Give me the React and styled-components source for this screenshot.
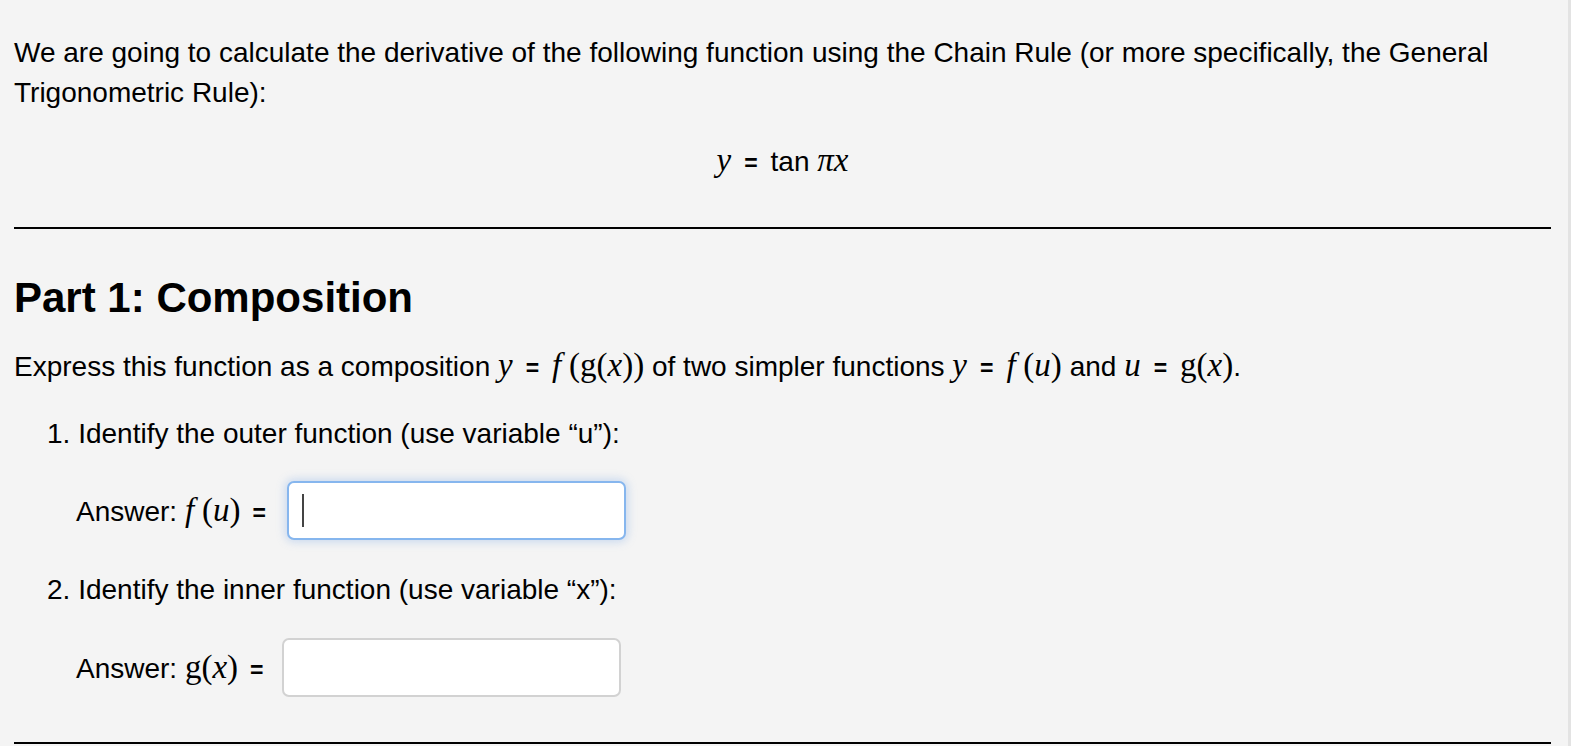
import React from 'react'
import styled, { createGlobalStyle } from 'styled-components'

const GlobalStyle = createGlobalStyle`
    html, body {
        margin: 0;
        padding: 0;
        background: #ffffff;
    }
    body {
        font-family: "Liberation Sans", Arial, sans-serif;
        color: #000;
    }
`

export const Panel = styled.div`
    width: 1537px;
    height: 746px;
    overflow: hidden;
    background-color: #f4f4f4;
    border-right: 3px solid #e3e3e3;
    padding: 33px 17px 0 14px;
    box-sizing: content-box;
    font-size: 28px;
`

export const Paragraph = styled.p`
    margin: ${props => props.top || 0}px 0 0 0;
    line-height: 40px;
    padding-left: ${props => props.indent || 0}px;
`

export const Equation = styled.div`
    margin-top: 27px;
    line-height: 40px;
    text-align: center;
`

export const Rule = styled.hr`
    margin: ${props => props.top}px 0 0 0;
    border: none;
    height: 2px;
    background: #000;
`

export const Heading = styled.h2`
    margin: 45px 0 0 0;
    font-size: 42px;
    font-weight: 700;
    line-height: 48px;
`

export const AnswerRow = styled.div`
    display: flex;
    align-items: center;
    margin-top: ${props => props.top}px;
    padding-left: 62px;
    height: 59px;
`

export const Field = styled.div`
    box-sizing: border-box;
    width: 339px;
    height: 59px;
    margin-left: ${props => props.gap}px;
    background: #fff;
    border-radius: 7px;
    display: flex;
    align-items: center;
    padding-left: 13px;
    border: ${props => props.focused ? '2px solid #86b6ee' : '2px solid #d2d2d2'};
    box-shadow: ${props => props.focused ? '0 0 9px 2px rgba(120, 165, 230, 0.35)' : 'none'};
`

export const Caret = styled.span`
    display: block;
    width: 2px;
    height: 33px;
    background: #444;
`

export const Var = styled.span`
    font-family: "Liberation Serif", "Times New Roman", serif;
    font-style: italic;
    font-size: 33px;
`

export const Roman = styled.span`
    font-family: "Liberation Serif", "Times New Roman", serif;
    font-size: 33px;
`

export const Eq = styled.span`
    margin: 0 ${props => props.gap || 13}px;
    font-size: 23px;
    font-weight: 700;
`

const Answer = ({ children, focused, top, gap }) => (
    <AnswerRow top={top}>
        <span>Answer: {children}<Eq gap={12}>=</Eq></span>
        <Field focused={focused} gap={gap}>{focused && <Caret />}</Field>
    </AnswerRow>
)

const App = () => {
    return (
        <>
            <GlobalStyle />
            <Panel>
                <Paragraph>
                    We are going to calculate the derivative of the following function using the Chain Rule (or more specifically, the General Trigonometric Rule):
                </Paragraph>
                <Equation>
                    <Var>y</Var><Eq>=</Eq>tan <Var>πx</Var>
                </Equation>
                <Rule top={44} />
                <Heading>Part 1: Composition</Heading>
                <Paragraph top={23}>
                    Express this function as a composition <Var>y</Var><Eq>=</Eq><Var>f</Var> <Roman>(g(<Var>x</Var>))</Roman> of two simpler functions <Var>y</Var><Eq>=</Eq><Var>f</Var> <Roman>(<Var>u</Var>)</Roman> and <Var>u</Var><Eq>=</Eq><Roman>g(<Var>x</Var>)</Roman>.
                </Paragraph>
                <Paragraph top={26} indent={33}>
                    1. Identify the outer function (use variable “u”):
                </Paragraph>
                <Answer focused top={27} gap={9}>
                    <Var>f</Var> <Roman>(<Var>u</Var>)</Roman>
                </Answer>
                <Paragraph top={30} indent={33}>
                    2. Identify the inner function (use variable “x”):
                </Paragraph>
                <Answer top={28} gap={6}>
                    <Roman>g(<Var>x</Var>)</Roman>
                </Answer>
                <Rule top={45} />
            </Panel>
        </>
    )
}

export default App
